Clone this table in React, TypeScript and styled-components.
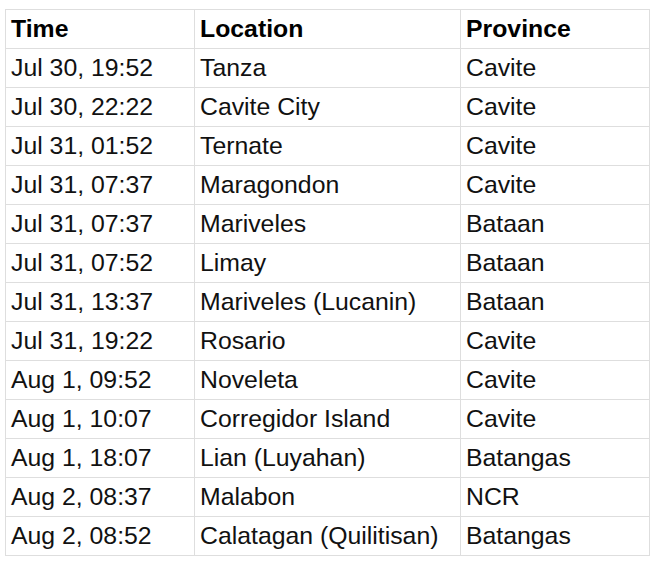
import React from 'react';
import styled, { createGlobalStyle } from 'styled-components';

const GlobalStyle = createGlobalStyle`
  body {
    margin: 0;
    background: #ffffff;
    font-family: 'Liberation Sans', Arial, sans-serif;
  }
`;

const Page = styled.div`
  width: 655px;
  height: 564px;
  padding: 9px 0 0 5px;
  box-sizing: border-box;
  overflow: hidden;
`;

const Table = styled.table`
  border-collapse: collapse;
  table-layout: fixed;
  width: 644px;
`;

const Cell = styled.td<{ $width?: number }>`
  width: ${(p) => (p.$width ? `${p.$width}px` : 'auto')};
  height: 39px;
  padding: 0 0 0 5px;
  border: 1.5px solid #dedede;
  font-size: 24.8px;
  color: #111;
  white-space: nowrap;
  overflow: hidden;
  vertical-align: middle;
  box-sizing: border-box;
`;

const HeadCell = styled(Cell).attrs({ as: 'th' })`
  font-weight: bold;
  text-align: left;
  color: #000;
`;

interface Row {
  time: string;
  location: string;
  province: string;
}

const rows: Row[] = [
  { time: 'Jul 30, 19:52', location: 'Tanza', province: 'Cavite' },
  { time: 'Jul 30, 22:22', location: 'Cavite City', province: 'Cavite' },
  { time: 'Jul 31, 01:52', location: 'Ternate', province: 'Cavite' },
  { time: 'Jul 31, 07:37', location: 'Maragondon', province: 'Cavite' },
  { time: 'Jul 31, 07:37', location: 'Mariveles', province: 'Bataan' },
  { time: 'Jul 31, 07:52', location: 'Limay', province: 'Bataan' },
  { time: 'Jul 31, 13:37', location: 'Mariveles (Lucanin)', province: 'Bataan' },
  { time: 'Jul 31, 19:22', location: 'Rosario', province: 'Cavite' },
  { time: 'Aug 1, 09:52', location: 'Noveleta', province: 'Cavite' },
  { time: 'Aug 1, 10:07', location: 'Corregidor Island', province: 'Cavite' },
  { time: 'Aug 1, 18:07', location: 'Lian (Luyahan)', province: 'Batangas' },
  { time: 'Aug 2, 08:37', location: 'Malabon', province: 'NCR' },
  { time: 'Aug 2, 08:52', location: 'Calatagan (Quilitisan)', province: 'Batangas' },
];

const App: React.FC = () => {
  return (
    <Page>
      <GlobalStyle />
      <Table>
        <thead>
          <tr>
            <HeadCell $width={189}>Time</HeadCell>
            <HeadCell $width={266}>Location</HeadCell>
            <HeadCell $width={189}>Province</HeadCell>
          </tr>
        </thead>
        <tbody>
          {rows.map((row, i) => (
            <tr key={i}>
              <Cell>{row.time}</Cell>
              <Cell>{row.location}</Cell>
              <Cell>{row.province}</Cell>
            </tr>
          ))}
        </tbody>
      </Table>
    </Page>
  );
};

export default App;
